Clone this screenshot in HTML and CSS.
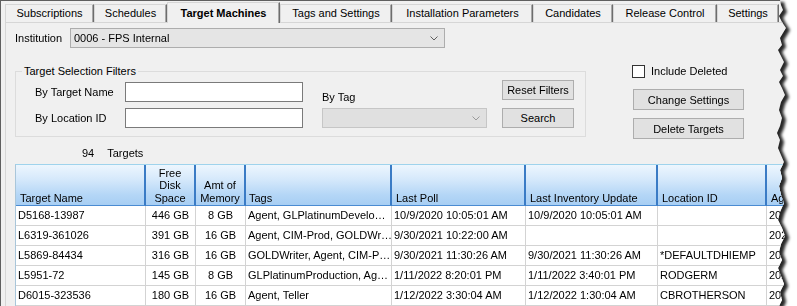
FILE: index.html
```html
<!DOCTYPE html>
<html>
<head>
<meta charset="utf-8">
<title>Target Machines</title>
<link rel="stylesheet" href="styles.css">
</head>
<body>
<div class="frame">
  <div class="window">
    <div class="tabs">
      <div class="tab t-subs">Subscriptions</div>
      <div class="tab t-sched">Schedules</div>
      <div class="tab tab-active t-target">Target Machines</div>
      <div class="tab t-tags">Tags and Settings</div>
      <div class="tab t-inst">Installation Parameters</div>
      <div class="tab t-cand">Candidates</div>
      <div class="tab t-rel">Release Control</div>
      <div class="tab t-set">Settings</div>
    </div>
    <div class="panel">
      <div class="inst-row">
        <span class="inst-lbl">Institution</span>
        <div class="combo inst-combo">
          <span>0006 - FPS Internal</span>
          <svg class="chev" width="8" height="5" viewBox="0 0 8 5"><path d="M0.5 0.5 L4 4 L7.5 0.5" fill="none" stroke="#5f5f5f" stroke-width="1"/></svg>
        </div>
      </div>
      <div class="filters-row">
        <div class="group">
          <span class="group-title">Target Selection Filters</span>
          <div class="group-body">
            <span class="flbl r1">By Target Name</span>
            <input class="tbox r1 c2" type="text">
            <span class="taglbl">By Tag</span>
            <button class="btn small r1 c6">Reset Filters</button>
            <span class="flbl r2">By Location ID</span>
            <input class="tbox r2 c2" type="text">
            <div class="combo tag-combo r2">
              <svg class="chev" width="8" height="5" viewBox="0 0 8 5"><path d="M0.5 0.5 L4 4 L7.5 0.5" fill="none" stroke="#9a9a9a" stroke-width="1"/></svg>
            </div>
            <button class="btn small r2 c6">Search</button>
          </div>
        </div>
        <div class="side">
          <div class="check"><span class="box"></span><span>Include Deleted</span></div>
          <button class="btn wide first">Change Settings</button>
          <button class="btn wide second">Delete Targets</button>
        </div>
      </div>
      <div class="count"><span class="num">94</span><span class="cnt-lbl">Targets</span></div>
      <div class="grid">
        <table>
          <colgroup>
            <col class="w-name"><col class="w-disk"><col class="w-mem"><col class="w-tags"><col class="w-poll"><col class="w-inv"><col class="w-loc"><col class="w-agent">
          </colgroup>
          <thead>
            <tr>
              <th>Target Name</th>
              <th class="ctr">Free<br>Disk<br>Space</th>
              <th class="ctr">Amt of<br>Memory</th>
              <th class="th-tags">Tags</th>
              <th>Last Poll</th>
              <th>Last Inventory Update</th>
              <th>Location ID</th>
              <th>Agent Version</th>
            </tr>
          </thead>
          <tbody>
            <tr><td>D5168-13987</td><td class="ctr">446 GB</td><td class="ctr">8 GB</td><td>Agent, GLPlatinumDevelo…</td><td>10/9/2020 10:05:01 AM</td><td>10/9/2020 10:05:01 AM</td><td></td><td>2019.1.0</td></tr>
            <tr><td>L6319-361026</td><td class="ctr">391 GB</td><td class="ctr">16 GB</td><td>Agent, CIM-Prod, GOLDWr…</td><td>9/30/2021 10:22:00 AM</td><td></td><td></td><td>2021.1.0</td></tr>
            <tr><td>L5869-84434</td><td class="ctr">316 GB</td><td class="ctr">16 GB</td><td>GOLDWriter, Agent, CIM-P…</td><td>9/30/2021 11:30:26 AM</td><td>9/30/2021 11:30:26 AM</td><td>*DEFAULTDHIEMP</td><td>2021.2.0</td></tr>
            <tr><td>L5951-72</td><td class="ctr">145 GB</td><td class="ctr">8 GB</td><td>GLPlatinumProduction, Ag…</td><td>1/11/2022 8:20:01 PM</td><td>1/11/2022 3:40:01 PM</td><td>RODGERM</td><td>2022.1.0</td></tr>
            <tr><td>D6015-323536</td><td class="ctr">180 GB</td><td class="ctr">16 GB</td><td>Agent, Teller</td><td>1/12/2022 3:30:04 AM</td><td>1/12/2022 1:30:04 AM</td><td>CBROTHERSON</td><td>2022.1.0</td></tr>
          </tbody>
        </table>
      </div>
    </div>
  </div>
</div>
</body>
</html>
```
FILE: styles.css
```css
html, body {
  margin: 0;
  padding: 0;
  background: #ffffff;
  overflow: hidden;
}
body {
  width: 797px;
  height: 306px;
  font-family: "Liberation Sans", Arial, sans-serif;
  font-size: 11px;
  color: #000;
}
.frame {
  width: 797px;
  height: 306px;
  filter: drop-shadow(4px 2px 1.5px rgba(0, 0, 0, 0.85));
}
.window {
  box-sizing: border-box;
  width: 792px;
  height: 306px;
  background: #f0f0f0;
  border-top: 1px solid #5f5f5f;
  border-left: 1px solid #5f5f5f;
  overflow: hidden;
  clip-path: polygon(0 0, 780px 0, 781px 5px, 783px 10px, 779px 16px, 782px 22px, 786px 28px, 783px 33px, 780px 38px, 782px 45px, 778px 50px, 781px 56px, 784px 62px, 780px 70px, 783px 76px, 779px 82px, 782px 88px, 785px 95px, 781px 102px, 779px 110px, 782px 118px, 780px 126px, 777px 133px, 780px 140px, 778px 148px, 781px 155px, 784px 162px, 780px 170px, 782px 178px, 779px 186px, 781px 195px, 784px 203px, 780px 212px, 778px 220px, 782px 228px, 785px 236px, 781px 244px, 779px 252px, 782px 260px, 778px 268px, 781px 276px, 784px 284px, 780px 292px, 782px 300px, 779px 306px, 0 306px);
}

/* Tabs */
.tabs {
  display: flex;
  align-items: flex-end;
  height: 21px;
  padding-left: 4px;
  position: relative;
  z-index: 2;
}
.tab {
  box-sizing: border-box;
  height: 18px;
  line-height: 16px;
  text-align: center;
  white-space: nowrap;
  background: #f0f0f0;
  border-top: 1px solid #d6d6d6;
  border-left: 1px solid #d6d6d6;
  border-right: 1px solid #6d6d6d;
  box-shadow: inset -1px 0 0 #a8a8a8;
}
.tab-active {
  height: 21px;
  margin-bottom: -1px;
  line-height: 20px;
  font-weight: bold;
  background: #f0f0f0;
}
.t-subs { width: 89px; }
.t-sched { width: 73px; }
.t-target { width: 113px; }
.t-tags { width: 112px; }
.t-inst { width: 141px; }
.t-cand { width: 80px; }
.t-rel { width: 104px; }
.t-set { width: 62px; }

/* Panel */
.panel {
  margin-left: 4px;
  border-top: 1px solid #d6d6d6;
  border-left: 1px solid #d6d6d6;
  padding: 5px 0 0 9px;
  height: 290px;
}
.inst-row {
  display: flex;
  align-items: center;
  height: 20px;
}
.inst-lbl {
  width: 55px;
}
.combo {
  box-sizing: border-box;
  display: flex;
  align-items: center;
  justify-content: space-between;
  height: 20px;
  background: #e5e5e5;
  border: 1px solid #adadad;
  padding: 0 6px 0 3px;
}
.inst-combo {
  width: 375px;
}
.chev {
  display: block;
}

/* Filters */
.filters-row {
  display: flex;
  align-items: flex-start;
  margin-top: 17px;
}
.group {
  position: relative;
  box-sizing: border-box;
  width: 571px;
  height: 66px;
  margin-top: 6px;
  border: 1px solid #dcdcdc;
  padding: 8px 10px 8px 19px;
}
.group-title {
  position: absolute;
  top: -7px;
  left: 6px;
  padding: 0 2px;
  line-height: 13px;
  background: #f0f0f0;
}
.group-body {
  display: grid;
  grid-template-columns: 90px 178px 19px 165px 15px 72px;
  grid-template-rows: 22px 20px;
  row-gap: 6px;
}
.flbl {
  grid-column: 1;
  align-self: center;
  line-height: 13px;
}
.flbl.r1 { grid-row: 1; align-self: end; margin-bottom: 3px; }
.flbl.r2 { grid-row: 2; }
.tbox {
  box-sizing: border-box;
  grid-column: 2;
  height: 20px;
  width: 178px;
  margin: 0;
  background: #fff;
  border: 1px solid #7a7a7a;
  padding: 0 2px;
  font: inherit;
}
.tbox.r1 { grid-row: 1; align-self: end; }
.tbox.r2 { grid-row: 2; }
.taglbl {
  grid-column: 4;
  grid-row: 1;
  align-self: end;
  line-height: 13px;
  margin-bottom: -2px;
}
.tag-combo {
  grid-column: 4;
  grid-row: 2;
  width: 165px;
  background: #e0e0e0;
  border-color: #c6c6c6;
  justify-content: flex-end;
}
.btn {
  box-sizing: border-box;
  margin: 0;
  padding: 0;
  font: inherit;
  color: #000;
  background: #e1e1e1;
  border: 1px solid #adadad;
  border-radius: 0;
  text-align: center;
}
.btn.small {
  grid-column: 6;
  width: 72px;
  height: 20px;
}
.btn.small.r1 { grid-row: 1; align-self: start; }
.btn.small.r2 { grid-row: 2; }

.side {
  display: flex;
  flex-direction: column;
  margin-left: 46px;
}
.check {
  display: flex;
  align-items: center;
  height: 13px;
  line-height: 13px;
}
.box {
  box-sizing: border-box;
  width: 13px;
  height: 13px;
  background: #fff;
  border: 1px solid #333;
  margin-right: 6px;
}
.btn.wide {
  width: 111px;
  height: 21px;
  margin-left: 1px;
}
.btn.first { margin-top: 11px; }
.btn.second { margin-top: 8px; }

/* Count */
.count {
  display: flex;
  margin-top: 8px;
  line-height: 13px;
}
.num { margin-left: 67px; }
.cnt-lbl { margin-left: 13px; }

/* Grid */
.grid {
  margin-top: 4px;
  border-top: 1px solid #9fd3ec;
  border-left: 1px solid #a9c6da;
  background: #fff;
  width: 900px;
}
table {
  border-collapse: separate;
  border-spacing: 0;
  table-layout: fixed;
  width: 851px;
}
.w-name { width: 130px; }
.w-disk { width: 50px; }
.w-mem { width: 50px; }
.w-tags { width: 146px; }
.w-poll { width: 134px; }
.w-inv { width: 132px; }
.w-loc { width: 109px; }
.w-agent { width: 100px; }
th {
  box-sizing: border-box;
  height: 41px;
  padding: 0 2px 1px 4px;
  vertical-align: bottom;
  text-align: left;
  font-weight: normal;
  line-height: 12.5px;
  white-space: nowrap;
  overflow: hidden;
  background: linear-gradient(#edf6fe 0%, #d6e9fb 35%, #b4d6f6 75%, #a7cef3 100%);
  border-right: 2px solid #3a7bc5;
  border-bottom: 1px solid #4a8bd2;
}
th.ctr {
  text-align: center;
  padding-left: 2px;
}
th.th-tags { padding-left: 3px; }
td {
  box-sizing: border-box;
  height: 20px;
  padding: 0 2px;
  line-height: 19px;
  white-space: nowrap;
  overflow: hidden;
  border-right: 1px solid #d3d3d3;
  border-bottom: 1px solid #d3d3d3;
}
td.ctr { text-align: center; }
```
